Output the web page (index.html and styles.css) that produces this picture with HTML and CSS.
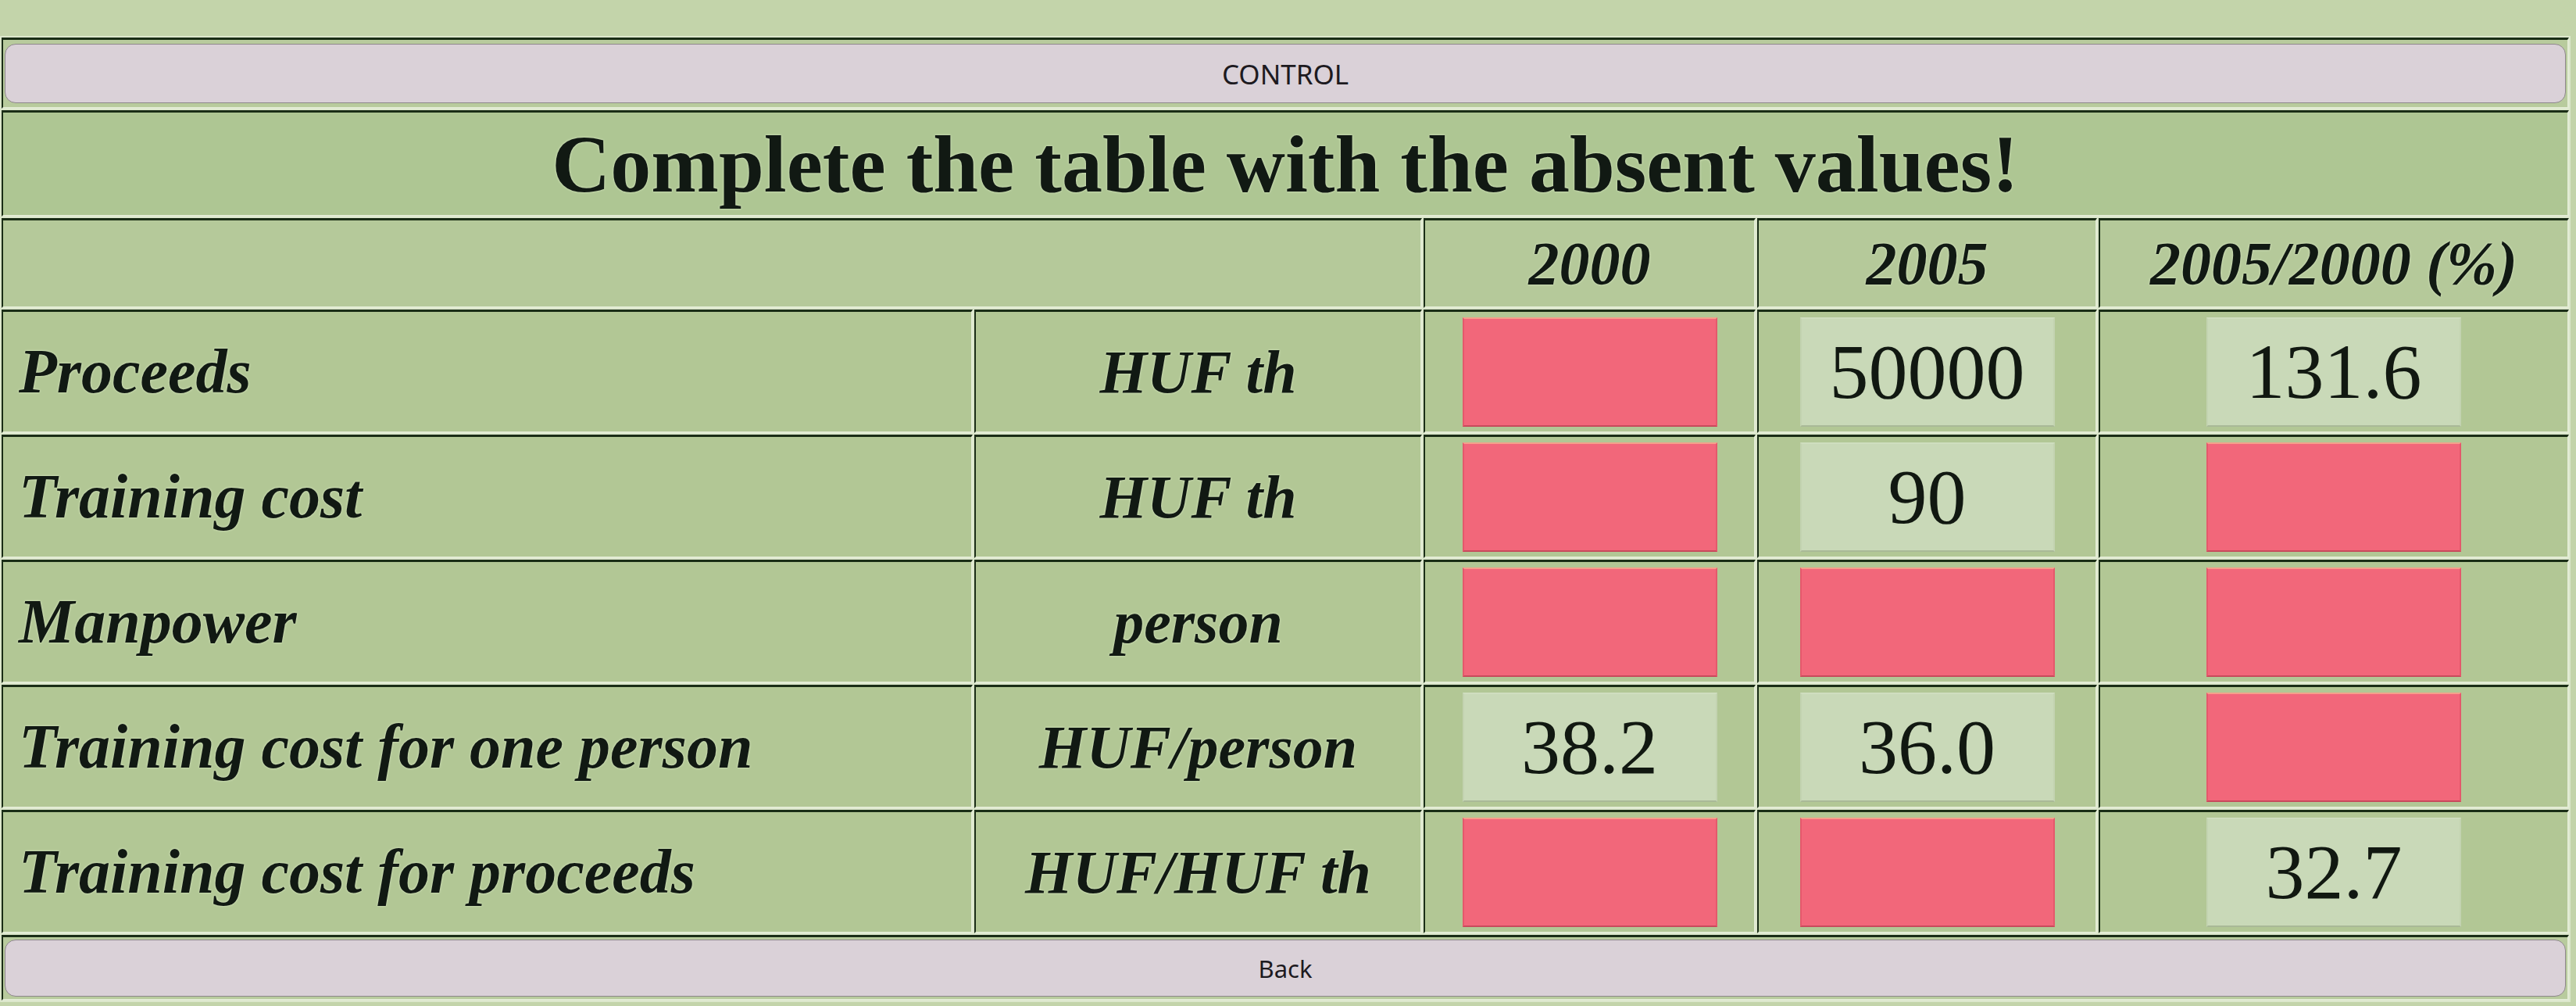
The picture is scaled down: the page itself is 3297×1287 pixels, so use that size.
FILE: index.html
```html
<!DOCTYPE html>
<html lang="en">
<head>
<meta charset="utf-8">
<title>Control</title>
<link rel="stylesheet" href="styles.css">
</head>
<body>
<table class="page">
  <colgroup>
    <col class="c-label">
    <col class="c-unit">
    <col class="c-y1">
    <col class="c-y2">
    <col class="c-pct">
  </colgroup>
  <tr>
    <td colspan="5" class="btn-cell"><button class="btn btn-top" type="button">CONTROL</button></td>
  </tr>
  <tr>
    <td colspan="5" class="title">Complete the table with the absent values!</td>
  </tr>
  <tr class="head">
    <th colspan="2"></th>
    <th>2000</th>
    <th>2005</th>
    <th>2005/2000 (%)</th>
  </tr>
  <tr class="row">
    <td class="label">Proceeds</td>
    <td class="unit">HUF th</td>
    <td class="val"><input class="box empty" type="text" value=""></td>
    <td class="val"><input class="box ro" type="text" value="50000" readonly></td>
    <td class="val"><input class="box ro" type="text" value="131.6" readonly></td>
  </tr>
  <tr class="row">
    <td class="label">Training cost</td>
    <td class="unit">HUF th</td>
    <td class="val"><input class="box empty" type="text" value=""></td>
    <td class="val"><input class="box ro" type="text" value="90" readonly></td>
    <td class="val"><input class="box empty" type="text" value=""></td>
  </tr>
  <tr class="row">
    <td class="label">Manpower</td>
    <td class="unit">person</td>
    <td class="val"><input class="box empty" type="text" value=""></td>
    <td class="val"><input class="box empty" type="text" value=""></td>
    <td class="val"><input class="box empty" type="text" value=""></td>
  </tr>
  <tr class="row">
    <td class="label">Training cost for one person</td>
    <td class="unit">HUF/person</td>
    <td class="val"><input class="box ro" type="text" value="38.2" readonly></td>
    <td class="val"><input class="box ro" type="text" value="36.0" readonly></td>
    <td class="val"><input class="box empty" type="text" value=""></td>
  </tr>
  <tr class="row">
    <td class="label">Training cost for proceeds</td>
    <td class="unit">HUF/HUF th</td>
    <td class="val"><input class="box empty" type="text" value=""></td>
    <td class="val"><input class="box empty" type="text" value=""></td>
    <td class="val"><input class="box ro" type="text" value="32.7" readonly></td>
  </tr>
  <tr>
    <td colspan="5" class="btn-cell btn-cell-bottom"><button class="btn btn-back" type="button">Back</button></td>
  </tr>
</table>
</body>
</html>
```

FILE: styles.css
```css
html, body {
  margin: 0;
  padding: 0;
}

body {
  background: #c3d4aa;
  width: 3297px;
  height: 1287px;
  overflow: hidden;
  font-family: "Liberation Serif", "Times New Roman", serif;
  color: #111913;
}

.page {
  margin-top: 46px;
  width: 3290px;
  table-layout: fixed;
  border-collapse: separate;
  border-spacing: 2px;
  background: #dce7cc;
}

.c-label { width: 1243px; }
.c-unit  { width: 573px; }
.c-y1    { width: 425px; }
.c-y2    { width: 435px; }
.c-pct   { width: 602px; }

td, th {
  border: 2px solid;
  border-top-width: 3px;
  border-color: #1a2d16 #e3ecd5 #e3ecd5 #1a2d16;
  background: #b2c795;
  padding: 0;
}

.btn-cell {
  padding: 5px 2px;
  background: #b8cb9d;
}

.btn-cell-bottom {
  padding: 3px 2px;
}

.btn {
  display: block;
  width: 100%;
  margin: 0;
  border: 1px solid #8e878c;
  border-radius: 14px;
  background: #dad1d8;
  color: #1d1a1f;
  font-family: "Noto Sans", "DejaVu Sans", sans-serif;
  padding: 0;
}

.btn-top {
  height: 76px;
  font-size: 35px;
}

.btn-back {
  height: 73px;
  font-size: 31px;
}

.title {
  text-align: center;
  font-weight: bold;
  font-size: 104px;
  line-height: 131px;
  background: #aec693;
  text-shadow: 0 0 3px rgba(235, 248, 215, 0.8);
}

.head th {
  font-weight: bold;
  font-style: italic;
  font-size: 78px;
  line-height: 110px;
  text-align: center;
  background: #b5c99a;
  text-shadow: 0 0 3px rgba(235, 248, 215, 0.8);
}

.row td {
  height: 153px;
  vertical-align: middle;
}

.label {
  font-weight: bold;
  font-style: italic;
  font-size: 80px;
  padding-left: 20px;
  text-align: left;
  white-space: nowrap;
  text-shadow: 0 0 3px rgba(235, 248, 215, 0.8);
}

.unit {
  font-weight: bold;
  font-style: italic;
  font-size: 78px;
  text-align: center;
  white-space: nowrap;
  text-shadow: 0 0 3px rgba(235, 248, 215, 0.8);
}

.val {
  text-align: center;
}

.box {
  display: block;
  margin: 0 auto;
  box-sizing: border-box;
  width: 326px;
  height: 140px;
  padding: 0;
  font-family: "Liberation Serif", "Times New Roman", serif;
  font-size: 100px;
  text-align: center;
  color: #111811;
  outline: none;
}

.empty {
  background: #f2677a;
  border: 2px solid;
  border-color: #f4a08a #e5586c #c84a5c #e5586c;
}

.ro {
  background: #c9d9b8;
  border: 2px solid;
  border-color: #cfdebf #c3d3b1 #a9b997 #c3d3b1;
}
```
